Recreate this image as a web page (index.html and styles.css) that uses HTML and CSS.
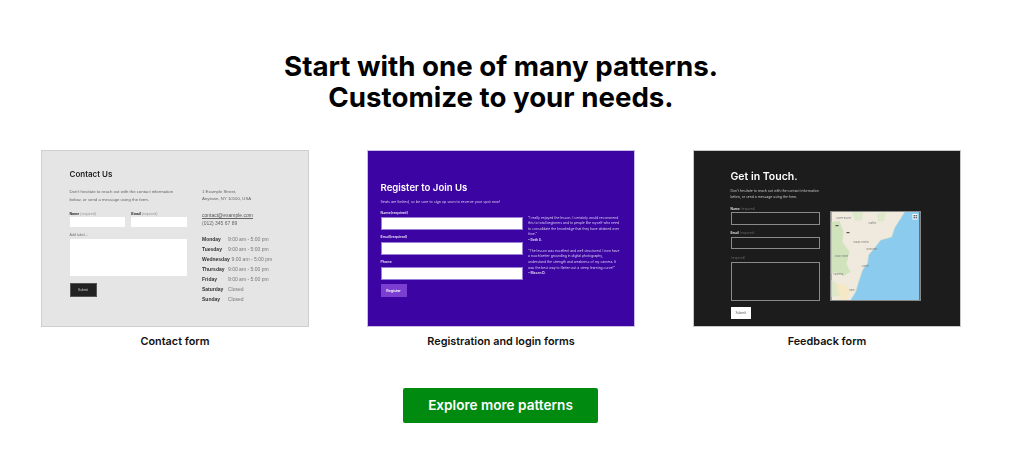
FILE: index.html
```html
<!DOCTYPE html>
<html lang="en">
<head>
<meta charset="utf-8">
<title>Patterns</title>
<link rel="stylesheet" href="styles.css">
</head>
<body>
<main class="page">
  <h1 class="headline">Start with one of many patterns.<br>Customize to your needs.</h1>
  <section class="gallery">
    <figure class="item">
      <div class="thumb thumb-contact">
        <div class="tc-main">
          <h2 class="tc-title">Contact Us</h2>
          <p class="tc-text">Don't hesitate to reach out with the contact information<br>below, or send a message using the form.</p>
          <div class="tc-pair">
            <div class="tc-field"><div class="tc-label"><b>Name</b> <span>(required)</span></div><div class="tc-input"></div></div>
            <div class="tc-field"><div class="tc-label"><b>Email</b> <span>(required)</span></div><div class="tc-input"></div></div>
          </div>
          <div class="tc-label tc-add">Add label…</div>
          <div class="tc-area"></div>
          <div class="tc-button">Submit</div>
        </div>
        <div class="tc-side">
          <p class="tc-text">1 Example Street,<br>Anytown, NY 10100, USA</p>
          <p class="tc-mail"><span>contact@example.com</span></p>
          <p class="tc-phone">(012) 345 67 89</p>
          <div class="tc-hours">
            <div class="tc-day"><b>Monday</b><span>9:00 am - 5:00 pm</span></div>
            <div class="tc-day"><b>Tuesday</b><span>9:00 am - 5:00 pm</span></div>
            <div class="tc-day tc-wide"><b>Wednesday</b><span>9:00 am - 5:00 pm</span></div>
            <div class="tc-day"><b>Thursday</b><span>9:00 am - 5:00 pm</span></div>
            <div class="tc-day"><b>Friday</b><span>9:00 am - 5:00 pm</span></div>
            <div class="tc-day"><b>Saturday</b><span>Closed</span></div>
            <div class="tc-day"><b>Sunday</b><span>Closed</span></div>
          </div>
        </div>
      </div>
      <figcaption class="caption">Contact form</figcaption>
    </figure>

    <figure class="item">
      <div class="thumb thumb-register">
        <h2 class="tr-title">Register to Join Us</h2>
        <p class="tr-intro">Seats are limited, so be sure to sign up soon to reserve your spot now!</p>
        <div class="tr-cols">
          <div class="tr-form">
            <div class="tr-label">Name(required)</div>
            <div class="tr-input"></div>
            <div class="tr-label">Email(required)</div>
            <div class="tr-input"></div>
            <div class="tr-label">Phone</div>
            <div class="tr-input"></div>
            <div class="tr-button">Register</div>
          </div>
          <div class="tr-quotes">
            <p>"I really enjoyed the lesson. I certainly would recommend<br>this to total beginners and to people like myself who need<br>to consolidate the knowledge that they have attained over<br>time."<br><b>– Beth S.</b></p>
            <p>"The lesson was excellent and well structured. I now have<br>a much better grounding in digital photography,<br>understand the strength and weakness of my camera. It<br>was the best way to flatten out a steep learning curve!"<br><b>– Mason D.</b></p>
          </div>
        </div>
      </div>
      <figcaption class="caption">Registration and login forms</figcaption>
    </figure>

    <figure class="item">
      <div class="thumb thumb-feedback">
        <h2 class="tf-title">Get in Touch.</h2>
        <p class="tf-text">Don't hesitate to reach out with the contact information<br>below, or send a message using the form.</p>
        <div class="tf-cols">
          <div class="tf-form">
            <div class="tf-label"><b>Name</b> (required)</div>
            <div class="tf-input"></div>
            <div class="tf-label"><b>Email</b> (required)</div>
            <div class="tf-input"></div>
            <div class="tf-label">(required)</div>
            <div class="tf-area"></div>
            <div class="tf-button">Submit</div>
          </div>
          <svg class="tf-map" viewBox="0 0 88 88" role="img" aria-label="Map">
            <rect width="88" height="88" fill="#8acbee"/>
            <path d="M0 0H73L68 8L63 16L60 25L49 28L43 36L37 43L36 51L31 58L27 70L24 80L19 88H0Z" fill="#efeadd"/>
            <path d="M0 10L8 9L12 20L11 30L18 40L15 52L19 60L12 64L4 60L0 62Z" fill="#d0e3bc"/>
            <path d="M20 0H32L30 8L24 9ZM45 2L54 0L53 9L47 10ZM0 68L6 72L9 84L0 85Z" fill="#dde8cb"/>
            <path d="M3 72H14L19 80L15 88H8Z" fill="#f6e6b8" opacity=".6"/>
            <path d="M73 0L68 8L63 16L60 25L49 28L43 36L37 43L36 51L31 58L27 70L24 80L19 88" fill="none" stroke="#e6e2c8" stroke-width=".6"/>
            <g class="tf-map-labels">
              <text x="5" y="7">Moree Bourke</text>
              <text x="37" y="12">Grafton</text>
              <text x="22" y="31">Dubbo Central</text>
              <text x="35" y="38">Newcastle</text>
              <text x="3" y="45">Snowy Plains</text>
              <text x="30" y="55">Sydney</text>
              <text x="2" y="63">Canberra</text>
              <text x="18" y="79">Eden</text>
            </g>
            <rect x="4" y="13" width="3" height="1.2" fill="#555"/>
            <rect x="15" y="20" width="3" height="1.2" fill="#555"/>
            <rect x="81" y="2" width="5" height="5.5" fill="#fff"/>
            <rect x="82" y="3" width="1.4" height="1.4" fill="#555"/><rect x="84" y="3" width="1.4" height="1.4" fill="#555"/><rect x="82" y="5" width="1.4" height="1.4" fill="#555"/><rect x="84" y="5" width="1.4" height="1.4" fill="#555"/>
          </svg>
        </div>
      </div>
      <figcaption class="caption">Feedback form</figcaption>
    </figure>
  </section>
  <a class="cta" href="#">Explore more patterns</a>
</main>
</body>
</html>
```
FILE: styles.css
```css
* { box-sizing: border-box; }
html, body { margin: 0; padding: 0; background: #fff; }
body { font-family: Inter, "Liberation Sans", sans-serif; color: #000; height: 474px; overflow: hidden; }
p, h1, h2, figure { margin: 0; }

.page { width: 1002px; display: flex; flex-direction: column; align-items: center; padding-top: 50.5px; }
.headline { font-size: 27.7px; line-height: 31px; font-weight: 700; text-align: center; color: #000; }

.gallery { display: flex; gap: 58px; margin-top: 37.5px; }
.item { width: 268px; display: flex; flex-direction: column; align-items: center; }
.thumb { width: 268px; height: 177px; overflow: hidden; outline: 1px solid #cfcfcf; outline-offset: -1px; }
.caption { margin-top: 7px; font-size: 10.85px; line-height: 15px; font-weight: 600; color: #111; }

.cta { margin: 38.5px 1px 0 0; width: 195px; height: 35px; display: flex; align-items: center; justify-content: center; background: #008a10; border-radius: 2px; color: #fff; font-size: 13.6px; font-weight: 600; text-decoration: none; }

/* contact thumbnail */
.thumb-contact { background: #e5e5e5; color: #2b2b2b; display: flex; padding: 19px 0 0 28.5px; font-family: "Liberation Sans", sans-serif; filter: blur(.4px); }
.tc-main { width: 117.5px; }
.tc-title { font-family: Inter, sans-serif; font-size: 8px; line-height: 11px; font-weight: 600; color: #222; }
.tc-text { font-size: 4.3px; line-height: 7.5px; color: #666; white-space: nowrap; }
.tc-main > .tc-text { margin-top: 8px; }
.tc-pair { display: flex; gap: 6px; margin-top: 9px; }
.tc-field { width: 55.75px; }
.tc-label { font-size: 3.6px; line-height: 5px; color: #999; }
.tc-label b { color: #222; }
.tc-input { height: 9.5px; background: #fff; }
.tc-add { margin-top: 6.5px; color: #777; }
.tc-area { height: 37px; background: #fff; margin-top: 1px; }
.tc-button { width: 27px; height: 14px; margin-top: 7px; background: #222; border: 1px solid #555; color: #ccc; font-size: 3.2px; display: flex; align-items: center; justify-content: center; }
.tc-side { margin-left: 15px; padding-top: 18.5px; width: 80px; }
.tc-mail { margin-top: 9px; font-size: 5px; line-height: 7px; color: #555; }
.tc-mail span { border-bottom: .5px solid #666; }
.tc-phone { font-size: 5px; line-height: 8px; margin-top: .5px; color: #666; }
.tc-hours { margin-top: 7.3px; }
.tc-day { display: flex; height: 9.9px; align-items: center; font-size: 5px; color: #777; white-space: nowrap; }
.tc-day b { width: 26px; color: #333; flex: none; }
.tc-wide b { width: 29.5px; }

/* register thumbnail */
.thumb-register { background: #3c04a2; color: #fff; padding: 31px 0 0 13.5px; font-family: Inter, sans-serif; outline-color: #c9bde6; filter: blur(.4px); }
.tr-title { font-size: 9.6px; line-height: 13px; font-weight: 600; }
.tr-intro { font-size: 3.6px; line-height: 5px; margin-top: 5.5px; color: #ddd3f2; }
.tr-cols { display: flex; gap: 5px; margin-top: 6px; }
.tr-form { width: 142.5px; flex: none; }
.tr-label { font-size: 3.6px; line-height: 5px; font-weight: 600; color: #e6def6; margin-top: 5.25px; }
.tr-label:first-child { margin-top: 0; }
.tr-input { height: 13px; background: #fff; border: .6px solid #9a7fd6; margin-top: 1.5px; }
.tr-button { width: 26px; height: 13px; margin-top: 4.5px; background: #7a3fd0; font-size: 3.6px; font-weight: 600; display: flex; align-items: center; justify-content: center; }
.tr-quotes { width: 96px; padding-top: 5px; font-size: 3.35px; line-height: 5.6px; color: #ddd3f2; white-space: nowrap; }
.tr-quotes p + p { margin-top: 5.4px; }

/* feedback thumbnail */
.thumb-feedback { background: #1c1c1c; color: #fff; padding: 20px 0 0 37.5px; font-family: Inter, sans-serif; outline-color: #c8c8c8; filter: blur(.4px); }
.tf-title { font-size: 10.5px; line-height: 14px; font-weight: 600; }
.tf-text { font-size: 3.4px; line-height: 5.5px; margin-top: 5px; color: #c9c9c9; }
.tf-cols { display: flex; gap: 11px; margin-top: 6.5px; }
.tf-form { width: 89.5px; flex: none; }
.tf-label { font-size: 3.2px; line-height: 5px; color: #666; margin-top: 6.3px; }
.tf-label:first-child { margin-top: 0; }
.tf-label b { color: #ddd; }
.tf-input { height: 12.7px; border: .7px solid #8a8a8a; margin-top: .6px; }
.tf-area { height: 39px; border: .7px solid #8a8a8a; margin-top: 1px; }
.tf-button { width: 20.5px; height: 12px; margin-top: 6.6px; background: #fff; color: #555; font-size: 3.2px; display: flex; align-items: center; justify-content: center; }
.tf-map { width: 89px; height: 88px; margin-top: 5.5px; flex: none; outline: .5px solid #888; }
.tf-map-labels { font-size: 2.2px; fill: #777; font-family: Inter, sans-serif; }
```
